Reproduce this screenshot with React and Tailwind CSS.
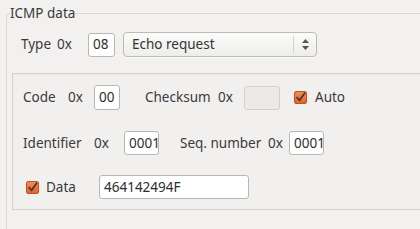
import React from "react";

const font = { fontFamily: '"Noto Sans", "DejaVu Sans", sans-serif' };

function Check() {
  return (
    <span className="flex h-[13px] w-[13px] items-center justify-center rounded-[2px] border border-[#c0531f] bg-gradient-to-b from-[#f08a55] to-[#e0642c]">
      <svg width="11" height="11" viewBox="0 0 11 11" fill="none">
        <path d="M2 5.5 L4.6 8.3 L9.6 1.2" stroke="#4a3328" strokeWidth="1.7" strokeLinecap="round" strokeLinejoin="round" />
      </svg>
    </span>
  );
}

function Field({ value, w, h = 24 }) {
  return (
    <div
      className="flex shrink-0 items-center rounded-[3px] border border-[#b9b7b2] bg-white pl-[4px] text-[#2e2e2e]"
      style={{ width: w, height: h }}
    >
      {value}
    </div>
  );
}

export default function App() {
  return (
    <div className="h-[229px] w-[420px] overflow-hidden bg-[#f2f1f0] text-[13.5px] text-[#3a3a3a]" style={font}>
      <fieldset className="ml-[6px] mt-[5px] h-[260px] w-[440px] rounded-tl-[4px] border border-[#d9d7d2]">
        <legend className="ml-[3px] leading-[16px]">ICMP data</legend>

        <div className="mt-[11px] flex h-[25px] items-center">
          <span className="ml-[14px] w-[36px]">Type</span>
          <span className="w-[31px]">0x</span>
          <Field value="08" w={27} />
          <div className="ml-[8px] flex h-[25px] w-[194px] items-center rounded-[4px] border border-[#bdbbb6] bg-gradient-to-b from-[#fbfbfa] to-[#eeedeb] shadow-[0_1px_0_rgba(255,255,255,0.8)]">
            <span className="flex-1 pl-[8px] text-[#333]">Echo request</span>
            <span className="h-[17px] w-px bg-[#d4d2cd]" />
            <span className="flex w-[22px] flex-col items-center gap-[3px]">
              <svg width="7" height="4" viewBox="0 0 7 4"><path d="M3.5 0 L7 4 L0 4 Z" fill="#555" /></svg>
              <svg width="7" height="4" viewBox="0 0 7 4"><path d="M0 0 L7 0 L3.5 4 Z" fill="#555" /></svg>
            </span>
          </div>
        </div>

        <div className="ml-[5px] mt-[16px] flex flex-col border border-[#d6d4cf] bg-[#f1f0ef] pb-[10px] pt-[11px] shadow-[inset_1px_1px_0_#ebeae8]">
          <div className="flex h-[25px] items-center">
            <span className="ml-[10px] w-[45px]">Code</span>
            <span className="w-[26px]">0x</span>
            <Field value="00" w={26} h={25} />
            <span className="ml-[25px] w-[73px]">Checksum</span>
            <span className="w-[26px]">0x</span>
            <div className="h-[24px] w-[36px] rounded-[3px] border border-[#d3d1cc] bg-[#ebeae8]" />
            <span className="ml-[14px]"><Check /></span>
            <span className="ml-[8px]">Auto</span>
          </div>

          <div className="mt-[21px] flex h-[24px] items-center">
            <span className="ml-[10px] w-[71px]">Identifier</span>
            <span className="w-[30px]">0x</span>
            <Field value="0001" w={35} />
            <span className="ml-[21px] w-[88px]">Seq. number</span>
            <span className="w-[21px]">0x</span>
            <Field value="0001" w={35} />
          </div>

          <div className="mt-[20px] flex h-[24px] items-center">
            <span className="ml-[13px]"><Check /></span>
            <span className="ml-[7px] w-[53px]">Data</span>
            <Field value="464142494F" w={150} />
          </div>
        </div>
      </fieldset>
    </div>
  );
}
